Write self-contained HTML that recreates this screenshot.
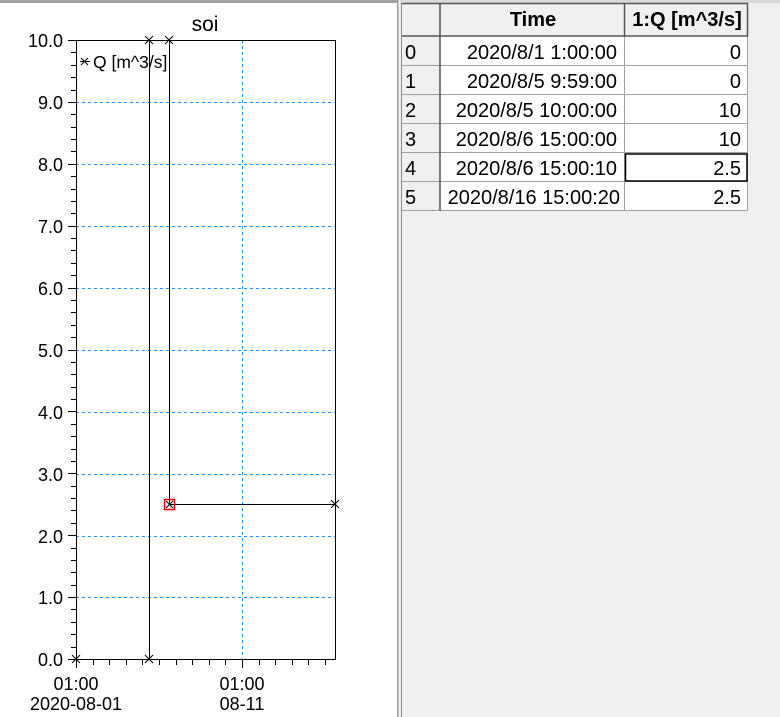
<!DOCTYPE html>
<html><head><style>
body{margin:0;width:780px;height:717px;overflow:hidden;background:#fff;font-family:"Liberation Sans",Arial,sans-serif;}
</style></head><body>
<svg width="780" height="717" xmlns="http://www.w3.org/2000/svg" style="position:absolute;left:0;top:0">
<rect x="0" y="0" width="780" height="717" fill="#fff"/>
<rect x="0" y="0" width="400" height="3" fill="#a0a0a0"/>
<rect x="398" y="0" width="382" height="717" fill="#f0f0f0"/>
<rect x="400" y="0" width="380" height="3" fill="#d8d8d8"/>
<rect x="397" y="0" width="1.5" height="717" fill="#a0a0a0"/>
<rect x="401" y="3" width="1" height="714" fill="#888"/>
<text x="205" y="31" text-anchor="middle" font-size="21" fill="#000">soi</text>
<g stroke="#1e90ff" stroke-width="1" stroke-dasharray="3,3">
<line x1="76" y1="102.5" x2="335" y2="102.5"/><line x1="76" y1="164.5" x2="335" y2="164.5"/>
<line x1="76" y1="226.5" x2="335" y2="226.5"/><line x1="76" y1="288.5" x2="335" y2="288.5"/>
<line x1="76" y1="350.5" x2="335" y2="350.5"/><line x1="76" y1="412.5" x2="335" y2="412.5"/>
<line x1="76" y1="474.5" x2="335" y2="474.5"/><line x1="76" y1="536.5" x2="335" y2="536.5"/>
<line x1="76" y1="597.5" x2="335" y2="597.5"/>
<line x1="242.5" y1="40" x2="242.5" y2="659"/>
</g>
<rect x="76.5" y="40.5" width="259" height="619" fill="none" stroke="#000" stroke-width="1"/>
<g stroke="#000" stroke-width="1" id="yt"></g>
<g stroke="#000" stroke-width="1" id="xt"></g>
<g font-size="18" text-anchor="end" fill="#000">
<text x="63" y="47">10.0</text><text x="63" y="109">9.0</text><text x="63" y="171">8.0</text>
<text x="63" y="233">7.0</text><text x="63" y="295">6.0</text><text x="63" y="357">5.0</text>
<text x="63" y="419">4.0</text><text x="63" y="481">3.0</text><text x="63" y="543">2.0</text>
<text x="63" y="604">1.0</text><text x="63" y="666">0.0</text>
</g>
<g font-size="18" text-anchor="middle" fill="#000">
<text x="76" y="690">01:00</text><text x="76" y="710">2020-08-01</text>
<text x="242" y="690">01:00</text><text x="242" y="710">08-11</text>
</g>
<text x="93" y="68" font-size="17.5" fill="#000">Q [m^3/s]</text>
<g stroke="#000" stroke-width="1" fill="none">
<path d="M81,58 l7,7 M88,58 l-7,7 M80,61.5 h10"/>
<polyline points="76,659.5 149.5,659.5 149.5,40.5 169.5,40.5 169.5,504.5 335,504.5"/>
<path d="M72,655 l8,8 M80,655 l-8,8 M145,655 l8,8 M153,655 l-8,8 M145,36 l8,8 M153,36 l-8,8 M165,36 l8,8 M173,36 l-8,8 M331,500 l8,8 M339,500 l-8,8 M166,501 l7,7 M173,501 l-7,7"/>
</g>
<rect x="164.5" y="499.5" width="10" height="10" fill="none" stroke="#e00000" stroke-width="1.5"/>
<rect x="402" y="3" width="346" height="208" fill="#fff"/>
<rect x="402" y="3" width="346" height="33" fill="#f0f0f0"/>
<rect x="402" y="3" width="38" height="208" fill="#f0f0f0"/>
<g stroke="#a0a0a0" stroke-width="1">
<line x1="402" y1="65.5" x2="748" y2="65.5"/><line x1="402" y1="94.5" x2="748" y2="94.5"/>
<line x1="402" y1="123.5" x2="748" y2="123.5"/><line x1="402" y1="152.5" x2="748" y2="152.5"/>
<line x1="402" y1="181.5" x2="748" y2="181.5"/><line x1="402" y1="210.5" x2="748" y2="210.5"/>
<line x1="624.5" y1="36" x2="624.5" y2="211"/><line x1="747.5" y1="3" x2="747.5" y2="211"/>
</g>
<g stroke="#555" stroke-width="1.5">
<line x1="402" y1="36" x2="748" y2="36"/>
<line x1="440" y1="3" x2="440" y2="211"/>
<line x1="624.5" y1="3" x2="624.5" y2="36"/>
<line x1="747.5" y1="3" x2="747.5" y2="36"/>
<line x1="402" y1="3.5" x2="748" y2="3.5"/>
</g>
<rect x="625.5" y="154" width="121.5" height="27" fill="none" stroke="#000" stroke-width="1.5"/>
<g font-size="20" fill="#000">
<text x="533" y="26" text-anchor="middle" font-weight="bold">Time</text>
<text x="687" y="26" text-anchor="middle" font-weight="bold">1:Q [m^3/s]</text>
<text x="405" y="59">0</text><text x="405" y="88">1</text><text x="405" y="117">2</text>
<text x="405" y="146">3</text><text x="405" y="175">4</text><text x="405" y="204">5</text>
</g>
<g font-size="20" fill="#000" text-anchor="end">
<text x="617" y="59">2020/8/1 1:00:00</text><text x="741" y="59">0</text>
<text x="617" y="88">2020/8/5 9:59:00</text><text x="741" y="88">0</text>
<text x="617" y="117">2020/8/5 10:00:00</text><text x="741" y="117">10</text>
<text x="617" y="146">2020/8/6 15:00:00</text><text x="741" y="146">10</text>
<text x="617" y="175">2020/8/6 15:00:10</text><text x="741" y="175">2.5</text>
<text x="620" y="204">2020/8/16 15:00:20</text><text x="741" y="204">2.5</text>
</g>
</svg>
<script>
var ns="http://www.w3.org/2000/svg";
var yt=document.getElementById("yt"),xt=document.getElementById("xt");
function L(g,x1,y1,x2,y2){var l=document.createElementNS(ns,"line");l.setAttribute("x1",x1);l.setAttribute("y1",y1);l.setAttribute("x2",x2);l.setAttribute("y2",y2);g.appendChild(l);}
for(var i=0;i<=50;i++){var y=Math.round(659-i*619/50)+0.5;L(yt,i%5==0?68:71,y,76,y);}
for(var k=0;k<=15;k++){var x=Math.round(76+k*16.6)+0.5;L(xt,x,659,x,(k%10==0)?668:665);}
</script>
</body></html>
